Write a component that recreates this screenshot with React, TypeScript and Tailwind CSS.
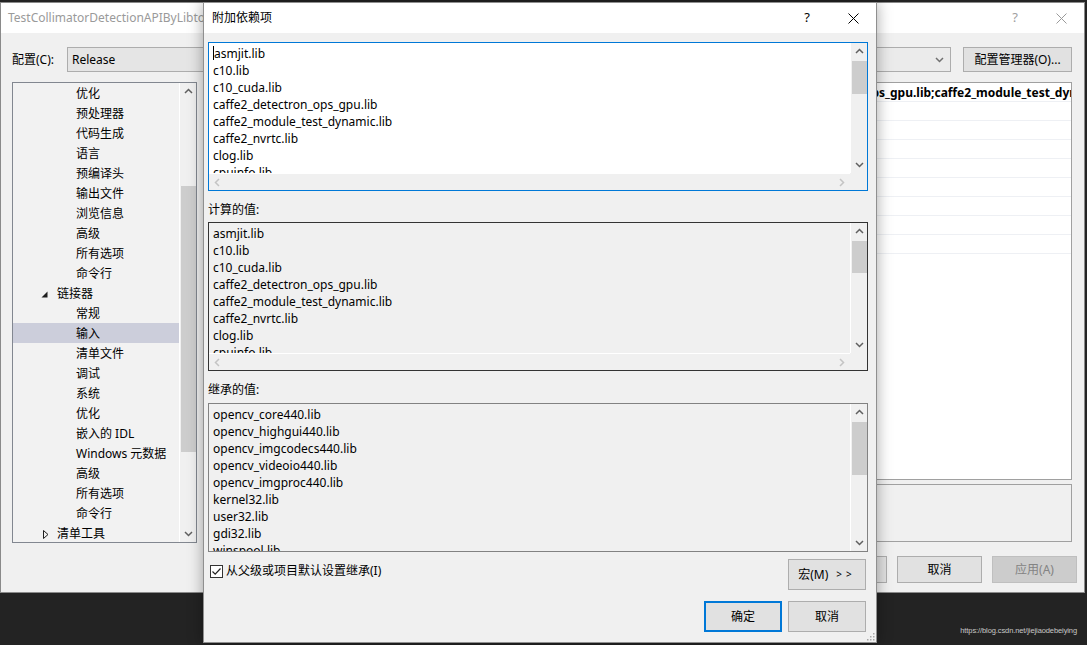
import React from "react";

const computed = [
  "asmjit.lib",
  "c10.lib",
  "c10_cuda.lib",
  "caffe2_detectron_ops_gpu.lib",
  "caffe2_module_test_dynamic.lib",
  "caffe2_nvrtc.lib",
  "clog.lib",
  "cpuinfo.lib",
  "dnnl.lib",
];

const inherited = [
  "opencv_core440.lib",
  "opencv_highgui440.lib",
  "opencv_imgcodecs440.lib",
  "opencv_videoio440.lib",
  "opencv_imgproc440.lib",
  "kernel32.lib",
  "user32.lib",
  "gdi32.lib",
  "winspool.lib",
  "comdlg32.lib",
];

const tree: { label: string; kind: "child" | "open" | "closed" }[] = [
  { label: "优化", kind: "child" },
  { label: "预处理器", kind: "child" },
  { label: "代码生成", kind: "child" },
  { label: "语言", kind: "child" },
  { label: "预编译头", kind: "child" },
  { label: "输出文件", kind: "child" },
  { label: "浏览信息", kind: "child" },
  { label: "高级", kind: "child" },
  { label: "所有选项", kind: "child" },
  { label: "命令行", kind: "child" },
  { label: "链接器", kind: "open" },
  { label: "常规", kind: "child" },
  { label: "输入", kind: "child" },
  { label: "清单文件", kind: "child" },
  { label: "调试", kind: "child" },
  { label: "系统", kind: "child" },
  { label: "优化", kind: "child" },
  { label: "嵌入的 IDL", kind: "child" },
  { label: "Windows 元数据", kind: "child" },
  { label: "高级", kind: "child" },
  { label: "所有选项", kind: "child" },
  { label: "命令行", kind: "child" },
  { label: "清单工具", kind: "closed" },
];

const gridRows = [
  {
    name: "附加依赖项",
    value:
      "asmjit.lib;c10.lib;c10_cuda.lib;caffe2_detectron_ops_gpu.lib;caffe2_module_test_dynamic.lib;caffe2_nvrtc.lib;clog.lib;cpuinfo.lib;%(AdditionalDependencies)",
  },
  { name: "忽略所有默认库", value: "" },
  { name: "忽略特定默认库", value: "" },
  { name: "模块定义文件", value: "" },
  { name: "将模块添加到程序集", value: "" },
  { name: "嵌入托管资源文件", value: "" },
  { name: "强制符号引用", value: "" },
  { name: "延迟加载的 DLL", value: "" },
  { name: "程序集链接资源", value: "" },
];

function Chevron({ dir, color = "#606060" }: { dir: "up" | "down" | "left" | "right"; color?: string }) {
  const paths = {
    up: "M1 6 L4.5 2.5 L8 6",
    down: "M1 3 L4.5 6.5 L8 3",
    left: "M6 1 L2.5 4.5 L6 8",
    right: "M3 1 L6.5 4.5 L3 8",
  };
  return (
    <svg width="9" height="9" viewBox="0 0 9 9">
      <path d={paths[dir]} fill="none" stroke={color} strokeWidth="1.5" />
    </svg>
  );
}

function CloseGlyph({ color }: { color: string }) {
  return (
    <svg width="11" height="11" viewBox="0 0 11 11">
      <path d="M0.5 0.5 L10.5 10.5 M10.5 0.5 L0.5 10.5" stroke={color} strokeWidth="1" />
    </svg>
  );
}

function VScroll({ thumb, edge = "" }: { thumb: string; edge?: string }) {
  return (
    <div className={`flex w-[17px] shrink-0 flex-col bg-[#f0f0f0] ${edge}`}>
      <div className="flex h-[17px] items-center justify-center">
        <Chevron dir="up" />
      </div>
      <div className="flex-1">
        <div className={`mx-auto w-[15px] bg-[#cdcdcd] ${thumb}`} />
      </div>
      <div className="flex h-[17px] items-center justify-center">
        <Chevron dir="down" />
      </div>
    </div>
  );
}

function ListBox({
  items,
  frame,
  thumb,
  hscroll,
  caret,
}: {
  items: string[];
  frame: string;
  thumb: string;
  hscroll: boolean;
  caret?: boolean;
}) {
  return (
    <div className={`flex h-[149px] flex-col border ${frame}`}>
      <div className="flex min-h-0 flex-1">
        <div className="min-w-0 flex-1 overflow-hidden pl-[4px] pt-[2px]">
          {items.map((t, i) => (
            <div key={i} className="h-[17px] whitespace-nowrap leading-[17px]">
              {caret && i === 0 && <span className="inline-block h-[14px] w-0 border-l border-black align-[-2px]" />}
              {t}
            </div>
          ))}
        </div>
        <VScroll thumb={thumb} edge="border-l border-white" />
      </div>
      {hscroll && (
        <div className="flex h-[17px]">
          <div className="flex flex-1 items-center justify-between border-t border-white bg-[#f0f0f0]">
            <div className="flex w-[17px] justify-center">
              <Chevron dir="left" color="#c4c4c4" />
            </div>
            <div className="flex w-[17px] justify-center">
              <Chevron dir="right" color="#c4c4c4" />
            </div>
          </div>
          <div className="h-[17px] w-[17px] bg-[#f0f0f0]" />
        </div>
      )}
    </div>
  );
}

function WinButton({ children, className = "" }: { children: React.ReactNode; className?: string }) {
  return (
    <div className={`flex items-center justify-center border border-[#adadad] bg-[#e1e1e1] ${className}`}>
      {children}
    </div>
  );
}

export default function App() {
  return (
    <div className="relative h-[645px] w-[1087px] overflow-hidden bg-[#232323] font-['Noto_Sans','Noto_Sans_CJK_SC',sans-serif] text-[12px] text-black">
      {/* background property pages window */}
      <div className="absolute left-0 top-[2px] flex h-[591px] w-[1085px] flex-col border border-[#8a8a8a] bg-[#f0f0f0]">
        <div className="flex h-[30px] items-center bg-white">
          <div className="flex-1 whitespace-nowrap pl-[7px] text-[#9a9a9a]">TestCollimatorDetectionAPIByLibtorch 属性页</div>
          <div className="flex w-[46px] justify-center text-[13px] text-[#a0a0a0]">?</div>
          <div className="flex w-[46px] justify-center">
            <CloseGlyph color="#9a9a9a" />
          </div>
        </div>

        <div className="flex flex-1 flex-col pb-[9px] pl-[11px] pr-[12px] pt-[14px]">
          <div className="flex h-[25px] items-center">
            <div className="w-[55px] shrink-0">配置(C):</div>
            <div className="flex h-full w-[330px] shrink-0 items-center justify-between border border-[#adadad] bg-[#e5e5e5] pl-[4px]">
              <span>Release</span>
              <span className="flex w-[16px] justify-center">
                <Chevron dir="down" />
              </span>
            </div>
            <div className="ml-[20px] w-[55px] shrink-0">平台(P):</div>
            <div className="flex h-full min-w-0 flex-1 items-center justify-between border border-[#adadad] bg-[#ebebeb] pl-[4px] pr-[3px]">
              <span>x64</span>
              <span className="flex w-[16px] justify-center">
                <Chevron dir="down" color="#707070" />
              </span>
            </div>
            <WinButton className="ml-[12px] h-full w-[109px] shrink-0">配置管理器(O)...</WinButton>
          </div>

          <div className="mt-[10px] flex h-[461px]">
            {/* tree */}
            <div className="flex w-[185px] shrink-0 border border-[#828790] bg-[#f2f2f2]">
              <div className="min-w-0 flex-1 overflow-hidden">
                {tree.map((n, i) => (
                  <div
                    key={i}
                    className={`flex h-[20px] items-center whitespace-nowrap pt-[2px] ${i === 12 ? "bg-[#cccedb]" : ""} ${
                      n.kind === "child" ? "pl-[63px]" : "pl-[28px]"
                    }`}
                  >
                    {n.kind === "open" && (
                      <span className="flex w-[16px] items-center">
                        <svg width="7" height="7" viewBox="0 0 7 7">
                          <path d="M6.5 0.5 L6.5 6.5 L0.5 6.5 Z" fill="#1e1e1e" />
                        </svg>
                      </span>
                    )}
                    {n.kind === "closed" && (
                      <span className="flex w-[16px] items-center pl-[2px]">
                        <svg width="6" height="9" viewBox="0 0 6 9">
                          <path d="M0.5 0.5 L5 4.5 L0.5 8.5 Z" fill="none" stroke="#1e1e1e" strokeWidth="1" />
                        </svg>
                      </span>
                    )}
                    {n.label}
                  </div>
                ))}
              </div>
              <VScroll thumb="mt-[86px] h-[266px]" edge="border-l border-white" />
            </div>

            {/* property grid + description */}
            <div className="ml-[8px] flex min-w-0 flex-1 flex-col">
              <div className="h-[398px] overflow-hidden border border-[#a0a0a0] bg-white">
                {gridRows.map((r, i) => (
                  <div key={i} className="flex h-[19px] items-center border-b border-[#eef0f4] pt-[1px]">
                    <div className={`w-[373px] shrink-0 whitespace-nowrap pl-[16px] ${i === 0 ? "font-bold" : ""}`}>{r.name}</div>
                    <div className={`min-w-0 flex-1 overflow-hidden whitespace-nowrap pl-[4px] ${i === 0 ? "font-bold" : ""}`}>
                      {r.value}
                    </div>
                  </div>
                ))}
              </div>
              <div className="mt-[4px] h-[58px] border border-[#a0a0a0] bg-[#f0f0f0]" />
            </div>
          </div>

          <div className="-mr-[5px] mt-[13px] flex h-[27px] justify-end gap-[10px]">
            <WinButton className="w-[85px]">确定</WinButton>
            <WinButton className="w-[85px]">取消</WinButton>
            <div className="flex w-[85px] items-center justify-center border border-[#bfbfbf] bg-[#cccccc] text-[#838383]">
              应用(A)
            </div>
          </div>
        </div>
      </div>

      {/* 附加依赖项 dialog */}
      <div className="absolute left-[203px] top-[2px] flex h-[641px] w-[674px] flex-col border border-[#8f8f8f] bg-[#f0f0f0] shadow-[0_0_14px_rgba(0,0,0,0.35)]">
        <div className="flex h-[30px] items-center bg-white">
          <div className="flex-1 pl-[8px]">附加依赖项</div>
          <div className="flex w-[46px] justify-center text-[13px]">?</div>
          <div className="flex w-[46px] justify-center">
            <CloseGlyph color="#000000" />
          </div>
        </div>

        <div className="flex flex-1 flex-col pl-[4px] pr-[8px] pt-[9px]">
          <ListBox items={computed} frame="border-[#0078d7] bg-white" thumb="mt-[1px] h-[33px]" hscroll caret />
          <div className="flex h-[31px] items-end pb-[4px] leading-[16px]">计算的值:</div>
          <ListBox items={computed} frame="border-[#333333] bg-[#f0f0f0]" thumb="mt-[1px] h-[32px]" hscroll />
          <div className="flex h-[32px] items-end pb-[5px] leading-[16px]">继承的值:</div>
          <ListBox items={inherited} frame="border-[#828282] bg-[#f0f0f0]" thumb="mt-[1px] h-[53px]" hscroll={false} />

          <div className="mt-[7px] flex h-[31px] items-start justify-between">
            <label className="flex h-[24px] items-center gap-[3px] pl-[2px]">
              <span className="flex h-[13px] w-[13px] items-center justify-center border border-[#333333] bg-white">
                <svg width="11" height="11" viewBox="0 0 11 11">
                  <path d="M1.5 5.5 L4.2 8.2 L9.5 2.5" fill="none" stroke="#222" strokeWidth="1.2" />
                </svg>
              </span>
              从父级或项目默认设置继承(I)
            </label>
            <WinButton className="mr-[2px] h-[31px] w-[78px] gap-[8px]">
              <span>宏(M)</span>
              <span className="text-[10px] tracking-[4px]">&gt;&gt;</span>
            </WinButton>
          </div>

          <div className="mt-[11px] flex justify-end gap-[6px] pr-[2px]">
            <div className="flex h-[31px] w-[78px] items-center justify-center border-2 border-[#0078d7] bg-[#e1e1e1]">确定</div>
            <WinButton className="h-[31px] w-[78px]">取消</WinButton>
          </div>
        </div>

        <svg className="absolute bottom-[1px] right-[1px]" width="10" height="10" viewBox="0 0 10 10">
          <g fill="#a8a8a8">
            <rect x="8" y="2" width="1.5" height="1.5" />
            <rect x="5" y="5" width="1.5" height="1.5" />
            <rect x="8" y="5" width="1.5" height="1.5" />
            <rect x="2" y="8" width="1.5" height="1.5" />
            <rect x="5" y="8" width="1.5" height="1.5" />
            <rect x="8" y="8" width="1.5" height="1.5" />
          </g>
        </svg>
      </div>

      <div className="absolute bottom-[9px] right-[10px] font-['Liberation_Sans',sans-serif] text-[7.5px] tracking-[-0.1px] text-[#c8c8c8]">
        https://blog.csdn.net/jiejiaodebeiying
      </div>
    </div>
  );
}
